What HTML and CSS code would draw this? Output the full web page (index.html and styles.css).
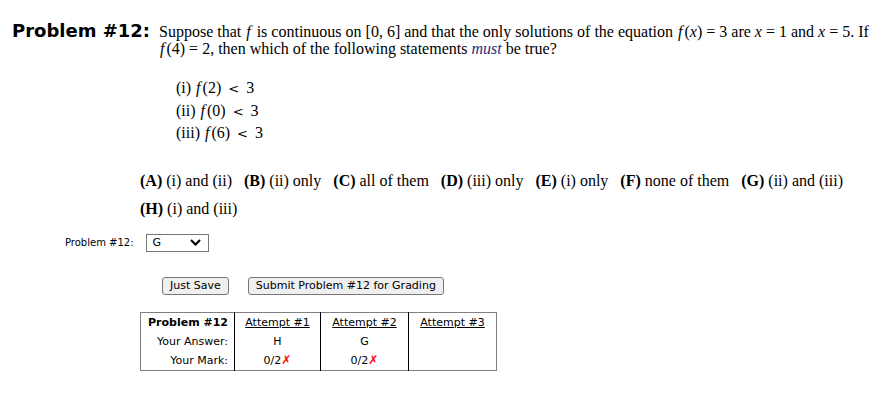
FILE: index.html
```html
<!DOCTYPE html>
<html>
<head>
<meta charset="utf-8">
<link rel="stylesheet" href="styles.css">
</head>
<body>
<div class="problem">
  <div class="ptitle">Problem #12:</div>
  <div class="ptext">
    <div class="stem">Suppose that <i class="m f">f</i> is continuous on [0, 6] and that the only solutions of the equation <i class="m f">f</i>(<i class="m">x</i>) = 3 are <i class="m">x</i> = 1 and <i class="m">x</i> = 5. If <i class="m f">f</i>(4) = 2, then which of the following statements <i class="must">must</i> be true?</div>
    <div class="stmts">
      <div class="stmt">(i) <i class="m f">f</i>(2) <span class="lt">&lt;</span> 3</div>
      <div class="stmt">(ii) <i class="m f">f</i>(0) <span class="lt">&lt;</span> 3</div>
      <div class="stmt">(iii) <i class="m f">f</i>(6) <span class="lt">&lt;</span> 3</div>
    </div>
  </div>
</div>
<div class="choices">
  <span class="ch"><b>(A)</b> (i) and (ii)</span>
  <span class="ch"><b>(B)</b> (ii) only</span>
  <span class="ch"><b>(C)</b> all of them</span>
  <span class="ch"><b>(D)</b> (iii) only</span>
  <span class="ch"><b>(E)</b> (i) only</span>
  <span class="ch"><b>(F)</b> none of them</span>
  <span class="ch"><b>(G)</b> (ii) and (iii)</span>
  <span class="ch"><b>(H)</b> (i) and (iii)</span>
</div>
<div class="answer">
  <span class="alabel">Problem #12:</span>
  <div class="sel"><span>G</span><svg width="11" height="7" viewBox="0 0 11 7"><path d="M1 1 L5.5 5.5 L10 1" fill="none" stroke="#000" stroke-width="2.2"/></svg></div>
</div>
<div class="buttons">
  <span class="btn">Just Save</span>
  <span class="btn">Submit Problem #12 for Grading</span>
</div>
<table class="att">
  <colgroup><col class="c1"><col class="c2"><col class="c3"><col class="c4"></colgroup>
  <tr>
    <th class="lab">Problem #12</th>
    <td class="hd"><u>Attempt #1</u></td>
    <td class="hd"><u>Attempt #2</u></td>
    <td class="hd"><u>Attempt #3</u></td>
  </tr>
  <tr>
    <td class="lab">Your Answer:</td>
    <td>H</td>
    <td>G</td>
    <td></td>
  </tr>
  <tr>
    <td class="lab">Your Mark:</td>
    <td>0/2<span class="x">✗</span></td>
    <td>0/2<span class="x">✗</span></td>
    <td></td>
  </tr>
</table>
</body>
</html>
```
FILE: styles.css
```css
body {
  margin: 0;
  background: #fff;
  color: #000;
  font-family: "DejaVu Sans", Verdana, sans-serif;
}
.problem {
  display: flex;
  align-items: baseline;
  padding: 20px 0 0 12px;
}
.ptitle {
  font-weight: bold;
  font-size: 18px;
  width: 147px;
  flex: none;
}
.ptext {
  font-family: "Liberation Serif", "Times New Roman", serif;
  font-size: 16px;
  line-height: 17px;
  max-width: 722px;
}
.m { font-style: italic; }
.f { padding: 0 2px 0 1px; }
.must { font-style: italic; color: #2a2a7a; }
.stmts {
  padding: 20px 0 0 17px;
  line-height: 21.5px;
}
.lt {
  font-family: "DejaVu Sans", sans-serif;
  font-size: 13px;
  padding: 0 3px;
}
.choices {
  font-family: "Liberation Serif", "Times New Roman", serif;
  font-size: 16px;
  line-height: 28px;
  padding: 22px 40px 0 140px;
  display: flex;
  flex-wrap: wrap;
  column-gap: 12px;
}
.answer {
  display: flex;
  align-items: center;
  padding: 11px 0 0 65px;
  font-size: 10px;
}
.alabel { margin-right: 12px; }
.sel {
  border: 1px solid #767676;
  display: flex;
  align-items: center;
  justify-content: space-between;
  padding: 0 7px 0 6px;
  box-sizing: border-box;
  width: 63px;
  height: 18px;
  font-size: 11px;
}
.buttons {
  display: flex;
  gap: 19px;
  padding: 25px 0 0 162px;
}
.btn {
  font-size: 11px;
  height: 18px;
  line-height: 16px;
  box-sizing: border-box;
  border: 1px solid #767676;
  border-radius: 3px;
  background: #efefef;
  padding: 0 7px;
}
.att {
  margin: 17px 0 0 140px;
  border-collapse: collapse;
  border: 1px solid #808080;
  font-size: 11px;
  table-layout: fixed;
  width: 357px;
}
.c1 { width: 94px; }
.c2 { width: 86px; }
.c3 { width: 88px; }
.c4 { width: 88px; }
.att td, .att th {
  padding: 0;
  height: 19px;
  text-align: center;
}
.att td + td, .att th + td { border-left: 1px solid #000; }
.att .lab { text-align: right; padding-right: 6px; }
.att th.lab { font-weight: bold; font-size: 11px; }
.x { color: #f00; font-size: 12px; }
```
